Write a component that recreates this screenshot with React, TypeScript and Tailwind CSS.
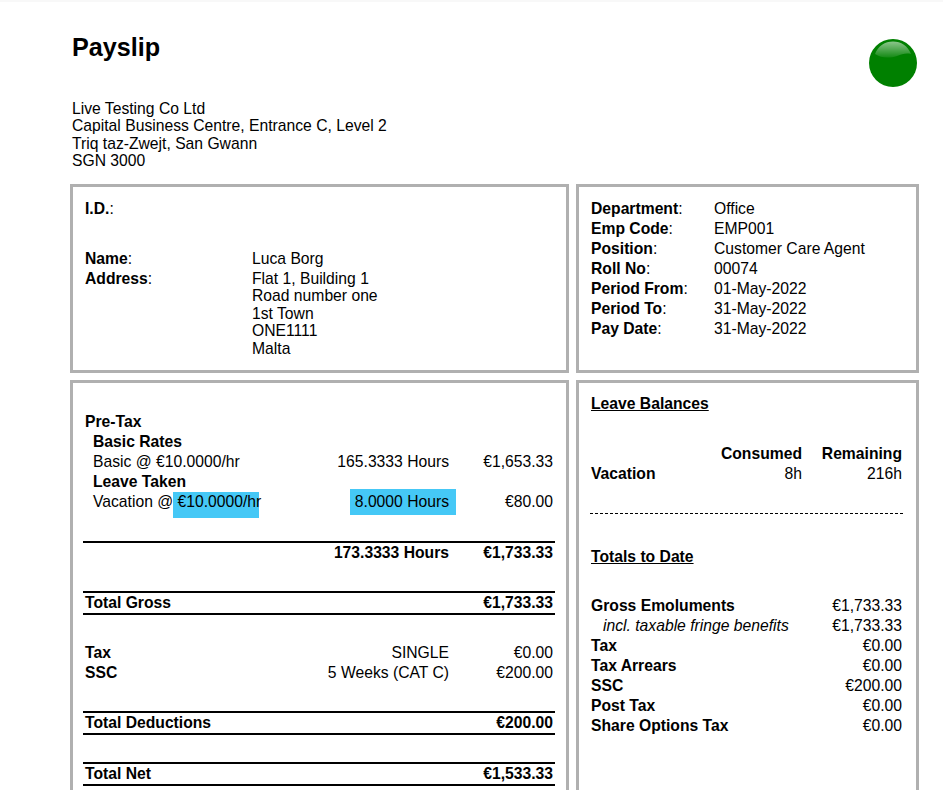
function StatusDot() {
  return (
    <svg width="48" height="48" viewBox="0 0 48 48" className="mt-[7px] mr-[2px] shrink-0">
      <defs>
        <linearGradient id="gloss" x1="0" y1="0" x2="0" y2="1">
          <stop offset="0" stopColor="#ffffff" stopOpacity="0.55" />
          <stop offset="1" stopColor="#ffffff" stopOpacity="0.08" />
        </linearGradient>
      </defs>
      <circle cx="24" cy="24" r="24" fill="#008000" />
      <path
        d="M6 15 C9 7 16 2.500 24 2.500 C32 2.500 39 7 42 15 C37 14 33 15 28 17 C20 19.500 12 19 6 15 Z"
        fill="url(#gloss)"
      />
    </svg>
  );
}

function InfoRow({ label, value, valueClass }: { label: string; value: React.ReactNode; valueClass: string }) {
  return (
    <div className="flex leading-5">
      <div className={valueClass}>
        <b>{label}</b>:
      </div>
      <div>{value}</div>
    </div>
  );
}

function PayRow({ label, mid, amount, bold, indent }: { label?: string; mid?: string; amount?: string; bold?: boolean; indent?: boolean }) {
  return (
    <div className={`relative flex h-5 leading-5 px-[2px] ${bold ? "font-bold" : ""}`}>
      <div className={`flex-1 ${indent ? "pl-2" : ""}`}>{label}</div>
      <div className="text-right">{mid}</div>
      <div className="w-[104px] text-right">{amount}</div>
    </div>
  );
}

function TotalRow({ label, amount, className }: { label: string; amount: string; className: string }) {
  return (
    <div className={`flex h-6 border-y-2 border-black px-[2px] leading-5 font-bold ${className}`}>
      <div className="flex-1">{label}</div>
      <div>{amount}</div>
    </div>
  );
}

function SideRow({ label, amount, italic }: { label: string; amount: string; italic?: boolean }) {
  return (
    <div className="flex h-5 leading-5">
      <div className={`flex-1 ${italic ? "pl-3 italic" : "font-bold"}`}>{label}</div>
      <div>{amount}</div>
    </div>
  );
}

export default function App() {
  return (
    <div className="h-[790px] w-[943px] overflow-hidden bg-white border-t-2 border-[#f8f8f8] font-['Liberation_Sans',sans-serif] text-[15.7px] text-black">
      <div className="w-[849px] ml-[70px]">
        {/* Header */}
        <div className="flex justify-between h-[182px] pt-[30px]">
          <div className="pl-[2px]">
            <h1 className="text-[25.2px] leading-[30px] font-bold">Payslip</h1>
            <div className="mt-[37.5px] leading-[17.6px]">
              <div>Live Testing Co Ltd</div>
              <div>Capital Business Centre, Entrance C, Level 2</div>
              <div>Triq taz-Zwejt, San Gwann</div>
              <div>SGN 3000</div>
            </div>
          </div>
          <StatusDot />
        </div>

        {/* Employee details */}
        <div className="grid grid-cols-[499px_343px] gap-x-[7px]">
          <div className="h-[189px] border-3 border-[#b0b0b0] pt-[12px] pl-3">
            <div className="leading-5">
              <b>I.D.</b>:
            </div>
            <div className="mt-[30px]">
              <InfoRow label="Name" value="Luca Borg" valueClass="w-[167px]" />
              <InfoRow
                label="Address"
                valueClass="w-[167px]"
                value={
                  <div className="leading-[17.6px] pt-[0.7px]">
                    <div>Flat 1, Building 1</div>
                    <div>Road number one</div>
                    <div>1st Town</div>
                    <div>ONE1111</div>
                    <div>Malta</div>
                  </div>
                }
              />
            </div>
          </div>

          <div className="h-[189px] border-3 border-[#b0b0b0] pt-[12px] pl-3">
            <InfoRow label="Department" value="Office" valueClass="w-[123px]" />
            <InfoRow label="Emp Code" value="EMP001" valueClass="w-[123px]" />
            <InfoRow label="Position" value="Customer Care Agent" valueClass="w-[123px]" />
            <InfoRow label="Roll No" value="00074" valueClass="w-[123px]" />
            <InfoRow label="Period From" value="01-May-2022" valueClass="w-[123px]" />
            <InfoRow label="Period To" value="31-May-2022" valueClass="w-[123px]" />
            <InfoRow label="Pay Date" value="31-May-2022" valueClass="w-[123px]" />
          </div>
        </div>

        {/* Pay lines and balances */}
        <div className="grid grid-cols-[499px_343px] gap-x-[7px] mt-[7px]">
          <div className="h-[500px] border-3 border-[#b0b0b0] pt-[29px] pl-[10px] pr-[11px]">
            <PayRow label="Pre-Tax" bold />
            <PayRow label="Basic Rates" bold indent />
            <PayRow label="Basic @ €10.0000/hr" mid="165.3333 Hours" amount="€1,653.33" indent />
            <PayRow label="Leave Taken" bold indent />
            <div className="relative">
              <div className="absolute left-[90px] top-0 h-[26px] w-[86px] bg-[#45c8f6]" />
              <div className="absolute left-[267px] top-[-3px] h-[26px] w-[106px] bg-[#45c8f6]" />
              <PayRow label="Vacation @ €10.0000/hr" mid="8.0000 Hours" amount="€80.00" indent />
            </div>
            <div className="mt-[29px] border-t-2 border-black">
              <PayRow mid="173.3333 Hours" amount="€1,733.33" bold />
            </div>
            <TotalRow label="Total Gross" amount="€1,733.33" className="mt-[28px]" />
            <div className="mt-[28px]">
              <div className="flex h-5 leading-5 px-[2px]">
                <div className="flex-1 font-bold">Tax</div>
                <div>SINGLE</div>
                <div className="w-[104px] text-right">€0.00</div>
              </div>
              <div className="flex h-5 leading-5 px-[2px]">
                <div className="flex-1 font-bold">SSC</div>
                <div>5 Weeks (CAT C)</div>
                <div className="w-[104px] text-right">€200.00</div>
              </div>
            </div>
            <TotalRow label="Total Deductions" amount="€200.00" className="mt-[28px]" />
            <TotalRow label="Total Net" amount="€1,533.33" className="mt-[27px]" />
          </div>

          <div className="h-[500px] border-3 border-[#b0b0b0] pt-[11px] pl-3 pr-[14px]">
            <div className="h-5 leading-5 font-bold underline">Leave Balances</div>
            <div className="mt-[30px] flex h-5 leading-5 font-bold">
              <div className="flex-1" />
              <div>Consumed</div>
              <div className="w-[100px] text-right">Remaining</div>
            </div>
            <div className="flex h-5 leading-5">
              <div className="flex-1 font-bold">Vacation</div>
              <div>8h</div>
              <div className="w-[100px] text-right">216h</div>
            </div>
            <div className="mt-[29px] -mx-[1px] border-b border-dashed border-black" />
            <div className="mt-[33px] h-5 leading-5 font-bold underline">Totals to Date</div>
            <div className="mt-[29px]">
              <SideRow label="Gross Emoluments" amount="€1,733.33" />
              <SideRow label="incl. taxable fringe benefits" amount="€1,733.33" italic />
              <SideRow label="Tax" amount="€0.00" />
              <SideRow label="Tax Arrears" amount="€0.00" />
              <SideRow label="SSC" amount="€200.00" />
              <SideRow label="Post Tax" amount="€0.00" />
              <SideRow label="Share Options Tax" amount="€0.00" />
            </div>
          </div>
        </div>
      </div>
    </div>
  );
}
